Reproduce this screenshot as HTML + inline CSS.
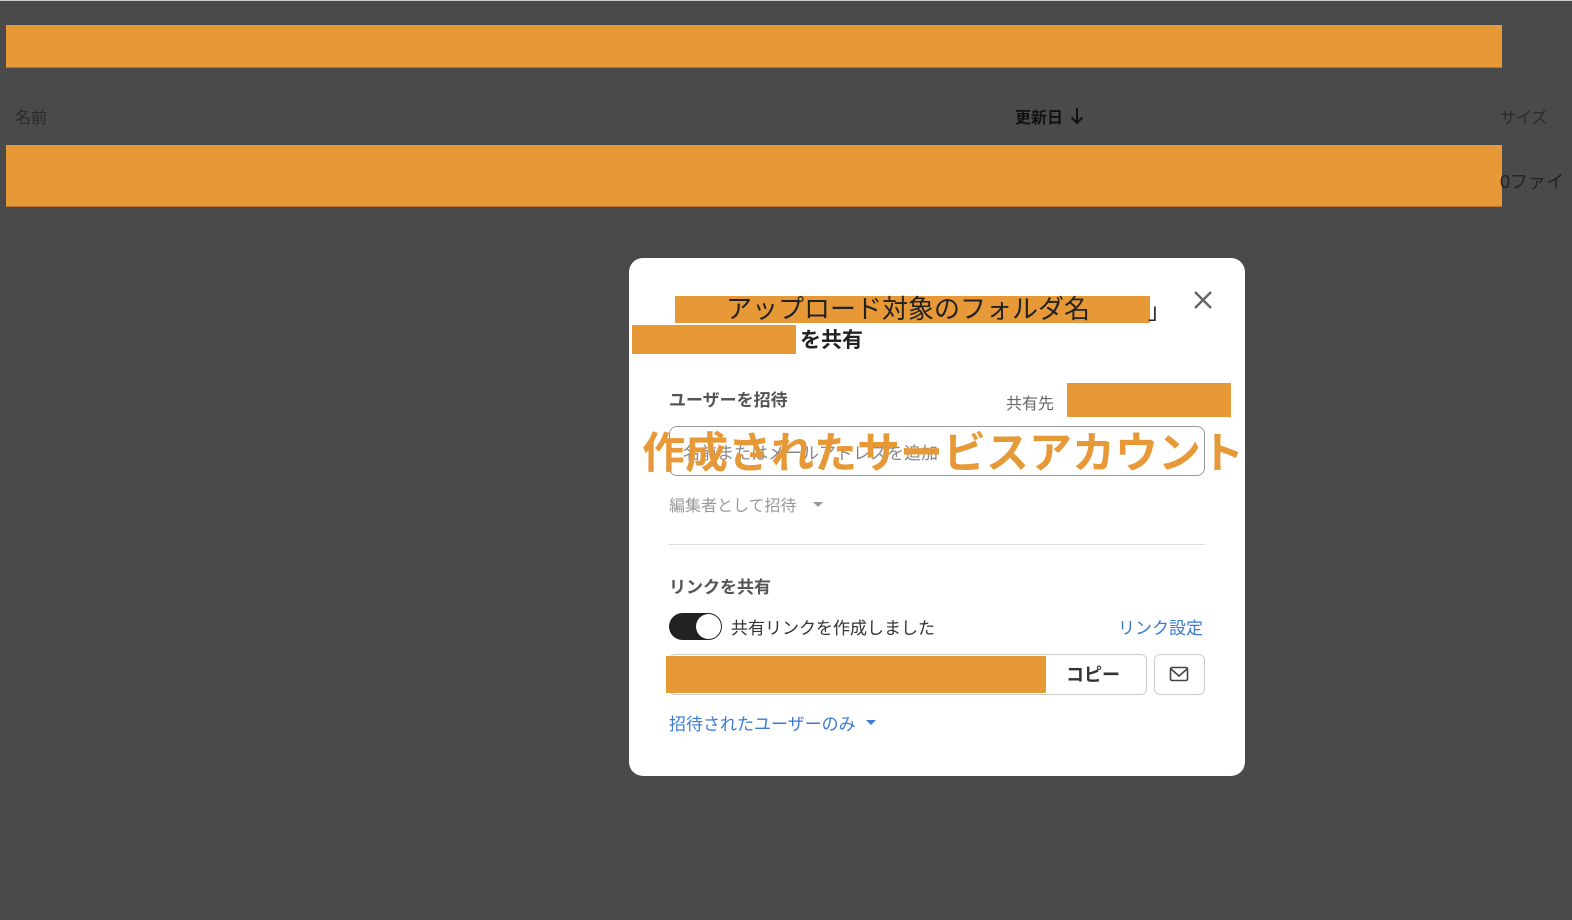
<!DOCTYPE html>
<html><head><meta charset="utf-8"><style>
*{margin:0;padding:0;box-sizing:border-box}
body{width:1572px;height:920px;background:#4a4a4a;position:relative;overflow:hidden;font-family:"Liberation Sans","Noto Sans CJK JP",sans-serif}
.a{position:absolute}
.or{background:#e89937;position:absolute}
</style></head><body>
<div class="a" style="left:0;top:0;width:1572px;height:1px;background:#ccc"></div>
<div class="or" style="left:6px;top:25px;width:1496px;height:43px;border-bottom:1px solid #b87428"></div>
<div class="a" style="left:15px;top:104px;font-size:16px;color:#2a2a2a">名前</div>
<div class="a" style="left:1015px;top:104px;font-size:16px;color:#111;font-weight:bold">更新日</div>
<svg class="a" style="left:1070px;top:107px" width="14" height="18" viewBox="0 0 14 18"><path d="M7 1V16M1.5 10.5L7 16L12.5 10.5" fill="none" stroke="#111" stroke-width="2"/></svg>
<div class="a" style="left:1500px;top:104px;font-size:16px;color:#2a2a2a">サイズ</div>
<div class="or" style="left:6px;top:145px;width:1496px;height:62px;border-bottom:1px solid #b87428"></div>
<div class="a" style="left:1500px;top:168px;font-size:18px;color:#222">0ファイ</div>
<div class="a" style="left:15px;top:219px;width:1557px;height:1px;background:#444"></div>

<div class="a" style="left:629px;top:258px;width:616px;height:518px;background:#fff;border-radius:14px"></div>
<div class="or" style="left:675px;top:296px;width:475px;height:27px"></div>
<div class="a" style="left:726px;top:289px;font-size:26px;color:#222">アップロード対象のフォルダ名</div>
<div class="a" style="left:1148px;top:294px;font-size:22px;color:#222">」</div>
<div class="or" style="left:632px;top:325px;width:164px;height:29px"></div>
<div class="a" style="left:800px;top:324px;font-size:21px;color:#222;font-weight:bold">を共有</div>
<svg class="a" style="left:1192px;top:289px" width="22" height="22" viewBox="0 0 22 22"><path d="M3 3L19 19M19 3L3 19" stroke="#666" stroke-width="2.4"/></svg>

<div class="a" style="left:669px;top:386px;font-size:17px;color:#555;font-weight:bold">ユーザーを招待</div>
<div class="a" style="left:1006px;top:390px;font-size:16px;color:#666">共有先</div>
<div class="or" style="left:1067px;top:383px;width:164px;height:34px"></div>
<div class="a" style="left:669px;top:426px;width:536px;height:50px;border:1px solid #999;border-radius:8px"></div>
<div class="a" style="left:683px;top:439px;font-size:17px;color:#888">名前またはメールアドレスを追加</div>
<div class="a" style="left:642px;top:419px;font-size:43px;color:#e89937;font-weight:bold;white-space:nowrap">作成されたサービスアカウント</div>
<div class="a" style="left:669px;top:492px;font-size:16px;color:#999">編集者として招待</div>
<svg class="a" style="left:813px;top:502px" width="10" height="6" viewBox="0 0 10 6"><path d="M0 0H10L5 5Z" fill="#999"/></svg>
<div class="a" style="left:669px;top:544px;width:536px;height:1px;background:#ddd"></div>

<div class="a" style="left:669px;top:573px;font-size:17px;color:#555;font-weight:bold">リンクを共有</div>
<div class="a" style="left:669px;top:613px;width:53px;height:27px;border-radius:14px;background:#222"></div>
<div class="a" style="left:696px;top:614px;width:25px;height:25px;border-radius:50%;background:#fff"></div>
<div class="a" style="left:731px;top:614px;font-size:17px;color:#333">共有リンクを作成しました</div>
<div class="a" style="left:1118px;top:614px;font-size:17px;color:#3a7bd5">リンク設定</div>
<div class="a" style="left:669px;top:654px;width:478px;height:41px;border:1px solid #ccc;border-radius:6px"></div>
<div class="or" style="left:666px;top:656px;width:380px;height:37px"></div>
<div class="a" style="left:1066px;top:661px;font-size:18px;color:#333;font-weight:bold">コピー</div>
<div class="a" style="left:1154px;top:654px;width:51px;height:41px;border:1px solid #ccc;border-radius:6px"></div>
<svg class="a" style="left:1169px;top:666px" width="20" height="16" viewBox="0 0 20 16"><rect x="1.5" y="1.5" width="17" height="13" rx="1.5" fill="none" stroke="#444" stroke-width="1.6"/><path d="M2 3L10 10L18 3" fill="none" stroke="#444" stroke-width="1.6"/></svg>
<div class="a" style="left:669px;top:710px;font-size:17px;color:#3a7bd5">招待されたユーザーのみ</div>
<svg class="a" style="left:866px;top:720px" width="10" height="6" viewBox="0 0 10 6"><path d="M0 0H10L5 5Z" fill="#3a7bd5"/></svg>
</body></html>
